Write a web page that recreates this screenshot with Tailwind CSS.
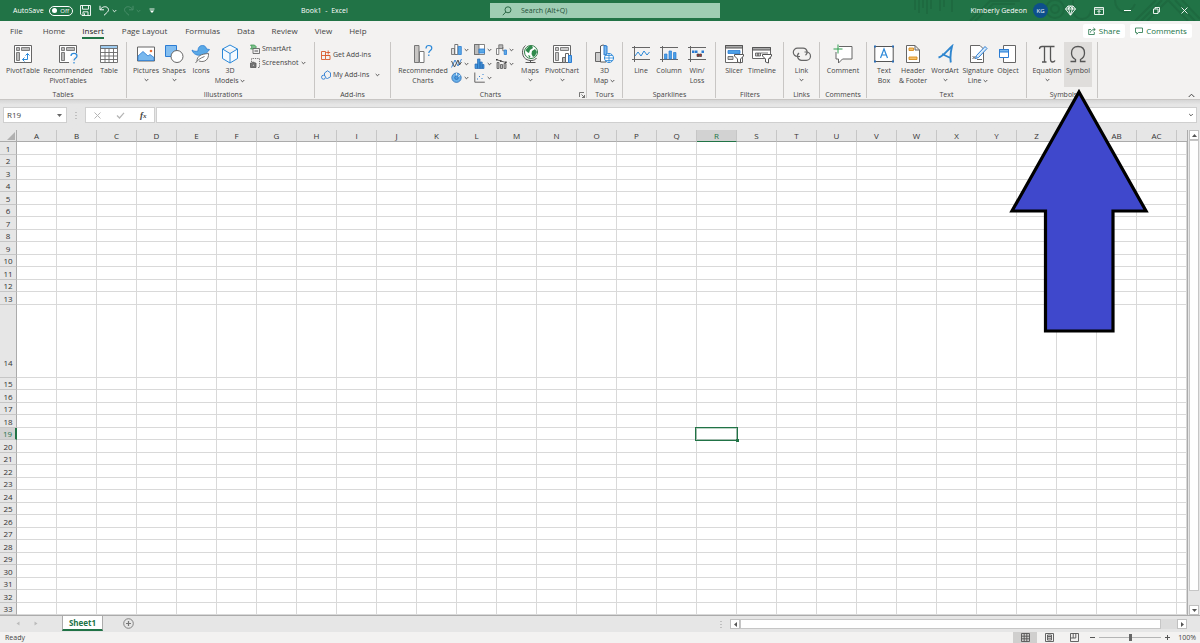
<!DOCTYPE html>
<html lang="en">
<head>
<meta charset="utf-8">
<title>Book1 - Excel</title>
<script src="https://cdn.jsdelivr.net/npm/@tailwindcss/browser@4"></script>
</head>
<body class="relative flex h-screen flex-col overflow-hidden bg-[#e6e6e6] font-['Open_Sans',sans-serif] text-[7px] leading-[10px] text-[#444]">
<svg class="hidden">
  <symbol id="chev" viewBox="0 0 5 4"><path d="M.7 1 2.5 2.8 4.3 1" fill="none" stroke="currentColor" stroke-width=".9"/></symbol>
</svg>

<header class="flex h-[21px] shrink-0 items-center bg-[#217346] text-white">
  <div class="flex w-[301px] shrink-0 items-center pl-[13px]">
    <label for="autosave" class="w-9">AutoSave</label>
    <button id="autosave" role="switch" aria-checked="false" class="flex h-[10px] w-6 items-center justify-between rounded-full border border-white pr-[3px] pl-0.5 text-[6px] leading-[8px]"><span class="size-[5px] rounded-full bg-white"></span>Off</button>
    <button aria-label="Save" class="ml-[7px]"><svg class="size-[11px]" viewBox="0 0 11 11" fill="none" stroke="#fff" stroke-width=".9"><path d="M.5.5h10v10H2L.5 9zM2.5.5v3.700h6V.5M3 10.500V6.800h5v3.700M4.500 8.300v2"/></svg></button>
    <button aria-label="Undo" class="ml-2 flex items-center gap-[2px]"><svg class="size-[11px]" viewBox="0 0 11 11" fill="none" stroke="#fff"><path d="M1 .8v4h4M1.200 4.600C3 2 6 1 8 2.300c2.500 1.700 1.500 4-.5 5.700L5 10.300"/></svg><svg class="h-1 w-[5px]"><use href="#chev"/></svg></button>
    <button aria-label="Redo" class="ml-1.5 flex items-center gap-[2px] text-[#4b8f6b]"><svg class="size-[11px]" viewBox="0 0 11 11" fill="none" stroke="currentColor"><path d="M10 .8v4H6M9.800 4.600C8 2 5 1 3 2.300.5 4 1.500 6.300 3.500 8L6 10.300"/></svg><svg class="h-1 w-[5px]"><use href="#chev"/></svg></button>
    <button aria-label="Customize Quick Access Toolbar" class="ml-2"><svg class="size-[6px]" viewBox="0 0 6 6"><path d="M.5 1h5" stroke="#fff" stroke-width=".9"/><path d="M.7 2.500h4.600L3 5z" fill="#fff"/></svg></button>
  </div>
  <h1 class="w-[189px] shrink-0 whitespace-pre">Book1  -  Excel</h1>
  <label class="flex h-[15px] w-[230px] shrink-0 items-center bg-[#9fcdb3] pl-3 text-[#1e4e34]">
    <svg class="size-[10px]" viewBox="0 0 10 10" fill="none" stroke="#1e5c3a" stroke-width=".9"><circle cx="6" cy="3.800" r="3"/><path d="M3.800 6 .8 9.200"/></svg>
    <input aria-label="Search" placeholder="Search (Alt+Q)" class="ml-[9px] w-40 bg-transparent outline-none placeholder:text-[#1e4e34]">
  </label>
  <div class="relative ml-auto h-full w-[290px] shrink-0">
    <svg class="absolute inset-0 h-full w-full" viewBox="0 0 290 21" fill="none" stroke="#1e6a40" stroke-width="2">
      <path d="M5 0v10M9 0v13M13 0v8M17 0v14M21 0v9M30 0v11M34 0v7M42 0v12M60 21 80 1h30M65 21 83 4h22M225 21l21-21M231 21l21-21M237 21l21-21M258 0l20 21M265 0l20 21M272 0l18 19"/>
      <circle cx="145" cy="9" r="9"/><circle cx="145" cy="9" r="4"/><path d="M163 0v10a9 9 0 0 0 18 0M205 0c0 14 16 16 20 4"/>
    </svg>
    <div class="relative flex h-full items-center justify-end pr-3">
      <span>Kimberly Gedeon</span>
      <button class="ml-1.5 size-[15px] rounded-full bg-[#0d4f8b] text-[6px]">KG</button>
      <button aria-label="Premium" class="ml-[17px]"><svg class="size-[11px]" viewBox="0 0 11 11" fill="none" stroke="#fff" stroke-width=".9"><path d="M3 1h5l2.500 3-5 6.300L.5 4zM.5 4h10M3.600 4l1.900 6 1.900-6L5.500 1 3.600 4 3 1m5 0-.6 3"/></svg></button>
      <button aria-label="Ribbon Display Options" class="ml-[18px]"><svg class="h-2 w-[10px]" viewBox="0 0 10 8" fill="none" stroke="#fff" stroke-width=".9"><path d="M.5.5h9v7h-9zM.5 2.200h9M5 6.800V3.500M3.500 5 5 3.500 6.500 5"/></svg></button>
      <button aria-label="Minimize" class="ml-5"><svg class="size-[7px]" viewBox="0 0 7 7"><path d="M0 3.500h7" stroke="#fff"/></svg></button>
      <button aria-label="Restore" class="ml-[22px]"><svg class="size-[7px]" viewBox="0 0 7 7" fill="none" stroke="#fff" stroke-width=".9"><path d="M.5 2h4.500v4.500H.5zM2 2V.5h4.500V5H5"/></svg></button>
      <button aria-label="Close" class="ml-[21px]"><svg class="size-[7px]" viewBox="0 0 7 7"><path d="m.5.5 6 6m0-6-6 6" stroke="#fff" stroke-width=".9"/></svg></button>
    </div>
  </div>
</header>

<nav class="flex h-[20px] shrink-0 items-center bg-[#f3f2f1] pr-2 pb-px pl-[10px] text-[8px] leading-[13px]">
  <a href="#" class="mr-5">File</a>
  <a href="#" class="mr-[17px]">Home</a>
  <a href="#" class="mr-[18px] border-y-2 border-t-transparent border-b-[#217346] text-[#222]">Insert</a>
  <a href="#" class="mr-[18px]">Page Layout</a>
  <a href="#" class="mr-[17px]">Formulas</a>
  <a href="#" class="mr-[17px]">Data</a>
  <a href="#" class="mr-[17px]">Review</a>
  <a href="#" class="mr-[17px]">View</a>
  <a href="#">Help</a>
  <button class="ml-auto flex h-[14px] w-[42px] items-center justify-center gap-[3px] rounded-xs bg-white text-[#217346]"><svg class="size-2" viewBox="0 0 8 8" fill="none" stroke="currentColor" stroke-width=".8"><path d="M3 2.500H.7v5h5.600V5M2.500 5.500C2.500 3.500 4 2.500 7 2.500M5.300.8l2 1.700-2 1.700"/></svg>Share</button>
  <button class="ml-[5px] flex h-[14px] w-[62px] items-center justify-center gap-[3px] rounded-xs bg-white text-[#217346]"><svg class="size-2" viewBox="0 0 8 8" fill="none" stroke="currentColor" stroke-width=".8"><path d="M.5 1h7v4.500H3.500l-1.700 1.700V5.500H.5z"/></svg>Comments</button>
</nav>

<section aria-label="Insert ribbon" class="flex h-[59px] shrink-0 border-b border-[#c8c6c4] bg-[#f3f2f1] text-center [&_button]:shrink-0 [&>div>span]:leading-[7px]">
  <div class="my-[1px] flex w-[127px] flex-col border-r border-[#c8c6c4] pl-1">
    <div class="flex h-[49px] shrink-0 pt-[2px]">
      <button class="flex w-[38px] flex-col items-center gap-[2px]"><svg class="size-5" viewBox="0 0 20 20" fill="none" stroke="#666"><path d="M1.500 1.500h17v17h-17z" fill="#fff"/><path d="M3.500 3.500h3v3h-3zM8.500 3.500h8v3h-8zM3.500 8.500h3v8h-3z" fill="#bbb" stroke-width=".8"/><path d="M9.500 15.500h5v-6M12.500 11.500l2-2 2 2M11.500 13.500l-2 2 2 2" stroke="#2b88d8"/></svg><span>PivotTable</span></button>
      <button class="flex w-[52px] flex-col items-center gap-[2px]"><svg class="size-5" viewBox="0 0 20 20" fill="none" stroke="#666"><path d="M11 18.500H1.500v-17h17V9" fill="#fff"/><path d="M3.500 3.500h3v3h-3zM8.500 3.500h8v3h-8zM3.500 8.500h3v8h-3z" fill="#bbb" stroke-width=".8"/><path d="M13 12c0-2 1.200-2.700 3-2.700s3 1 3 2.700c0 2.300-3 2-3 4.500M16 18v1.500" stroke="#2b88d8" stroke-width="1.200"/></svg><span>Recommended<br>PivotTables</span></button>
      <button class="flex w-[30px] flex-col items-center gap-[2px]"><svg class="size-5" viewBox="0 0 20 20" fill="none" stroke="#666" stroke-width=".9"><path d="M1.500 1.500h17v17h-17z" fill="#fff"/><path d="M1.500 1.500h17v3h-17z" fill="#9ecbef"/><path d="M1.500 8.500h17M1.500 12h17M1.500 15.500h17M6 4.500v14M10 4.500v14M14.500 4.500v14"/></svg><span>Table</span></button>
    </div>
    <span class="pr-1">Tables</span>
  </div>

  <div class="my-[1px] flex w-[188px] flex-col border-r border-[#c8c6c4] pl-[5px]">
    <div class="flex h-[49px] shrink-0 pt-[2px]">
      <button class="flex w-7 flex-col items-center gap-[2px]"><svg class="size-5" viewBox="0 0 20 20" fill="none"><path d="M1.500 3h17v14h-17z" fill="#fff" stroke="#666"/><path d="m2 12 5-4.500 5 4.500 2-1.500 4 3v3H2z" fill="#79b8ee" stroke="#2b7cd3" stroke-width=".8"/><circle cx="15" cy="7" r="1.300" fill="#e8703a"/></svg><span>Pictures</span><svg class="h-1 w-[5px]"><use href="#chev"/></svg></button>
      <button class="flex w-7 flex-col items-center gap-[2px]"><svg class="size-5" viewBox="0 0 20 20"><path d="M1.500 1.500h11v11h-11z" fill="#83bef0" stroke="#2b7cd3"/><circle cx="13" cy="12.500" r="6" fill="#fff" stroke="#666"/></svg><span>Shapes</span><svg class="h-1 w-[5px]"><use href="#chev"/></svg></button>
      <button class="flex w-[26px] flex-col items-center gap-[2px]"><svg class="size-5" viewBox="0 0 20 20"><path d="M1 6c2 1.500 4 1.500 6 1C7 3 9 1.500 11.500 1.500S15 3 15.500 5L18.500 5.500C17 8 15 10 11 11c-5 1-9-1-10-5z" fill="#5aa9e6" stroke="#2b7cd3" stroke-width=".8"/><path d="M6 17c0-5 4-7 11.500-7.500C18 15 14 19 8 17M4.500 19c2-3 5-5 9-6.500" fill="#fff" stroke="#666" stroke-width=".9"/></svg><span>Icons</span></button>
      <button class="flex w-8 flex-col items-center gap-[2px]"><svg class="size-5" viewBox="0 0 20 20" fill="#f4faff" stroke="#2b88d8"><path d="m10 1 7.500 4v9.500L10 19l-7.500-4.500V5zM2.500 5l7.500 4.500L17.500 5M10 9.500V19"/></svg><span class="whitespace-nowrap">3D<br>Models <svg class="inline h-1 w-[5px]"><use href="#chev"/></svg></span></button>
      <div class="flex flex-col gap-1 pl-1">
        <button class="flex items-center gap-0.5"><svg class="size-[10px]" viewBox="0 0 10 10"><path d="M.5 1h4l2 2-2 2h-4l1.500-2z" fill="#7cc08b" stroke="#2f8f46" stroke-width=".7"/><path d="M3 4.500h6.500v5H3z" fill="#eee" stroke="#555" stroke-width=".8"/><path d="M4.500 7h3.500" stroke="#555"/></svg>SmartArt</button>
        <button class="flex items-center gap-0.5"><svg class="size-[10px]" viewBox="0 0 10 10" fill="none" stroke="#555" stroke-width=".8"><path d="M1.500 4V.5h8v9H7" stroke-dasharray="1.300 1"/><path d="M.5 5h1.300l.6-.8h1.700l.6.800H6v4.500H.5z" fill="#777"/><circle cx="3.300" cy="7.200" r="1" fill="#fff"/></svg>Screenshot <svg class="h-1 w-[5px]"><use href="#chev"/></svg></button>
      </div>
    </div>
    <span>Illustrations</span>
  </div>

  <div class="my-[1px] flex w-[76px] flex-col border-r border-[#c8c6c4]">
    <div class="flex h-[49px] shrink-0 flex-col items-start gap-2.5 pt-2 pl-[6px]">
      <button class="flex items-center gap-0.5"><svg class="size-[10px]" viewBox="0 0 10 10" fill="none" stroke="#d8592a" stroke-width=".9"><path d="M.5 1.500H4.500V9.500h-4zM.5 5.500H9M4.500 5.500H9v4H4.500M7.200.5v4M5.200 2.500h4"/></svg>Get Add-ins</button>
      <button class="flex items-center gap-0.5"><svg class="size-[10px]" viewBox="0 0 10 10" fill="none" stroke="#2b7cd3" stroke-width=".9"><path d="M3.500 5V3L6.500.8l3 2v4L6.500 8.500 5 8"/><circle cx="2.500" cy="7.200" r="2"/></svg>My Add-ins <svg class="ml-1 h-1 w-[5px]"><use href="#chev"/></svg></button>
    </div>
    <span>Add-ins</span>
  </div>

  <div class="my-[1px] flex w-[196px] flex-col border-r border-[#c8c6c4] pl-[5px]">
    <div class="flex h-[49px] shrink-0 pt-[2px]">
      <button class="flex w-[54px] flex-col items-center gap-[2px]"><svg class="size-5" viewBox="0 0 20 20" fill="none"><path d="M1.500 1.500H6v17H1.500z" fill="#c8c6c4" stroke="#777"/><path d="M6.500 7.500H11v11H6.500z" fill="#fff" stroke="#777"/><path d="M13 4.500c0-2 1-3 2.800-3s3 1 3 2.700c0 2.300-3 2.300-3 4.800M15.800 10.500V12" stroke="#2b88d8" stroke-width="1.200"/></svg><span>Recommended<br>Charts</span></button>
      <div class="grid w-[68px] grid-cols-3 content-start gap-x-[1px] gap-y-[3px] pl-[1px]">
        <button aria-label="Column chart" class="flex items-center gap-[2px]"><svg class="size-[11px]" viewBox="0 0 11 11" stroke-width=".8"><path d="M.5 4.500h3v6h-3z" fill="#ddd" stroke="#666"/><path d="M3.800.5h3v10h-3z" fill="#fff" stroke="#555"/><path d="M7.300 2.500h3v8h-3z" fill="#5aa9e6" stroke="#2b7cd3"/></svg><svg class="h-1 w-[5px]"><use href="#chev"/></svg></button>
        <button aria-label="Hierarchy chart" class="flex items-center gap-[2px]"><svg class="size-[11px]" viewBox="0 0 11 11" stroke-width=".8"><path d="M.5.5h10v10H.5z" fill="#fff" stroke="#666"/><path d="M.5.5H5v10H.5z" fill="#bbb" stroke="#666"/><path d="M5 5h5.500v4H5z" fill="#5aa9e6" stroke="#2b7cd3"/></svg><svg class="h-1 w-[5px]"><use href="#chev"/></svg></button>
        <button aria-label="Waterfall chart" class="flex items-center gap-[2px]"><svg class="size-[11px]" viewBox="0 0 11 11" stroke-width=".8"><path d="M.5 4.500h2.300v6H.5z" fill="#fff" stroke="#666"/><path d="M2.800.8h4v3.700h-4z" fill="#bbb" stroke="#666"/><path d="M6.800 3v3.800h1.500" fill="none" stroke="#666"/><path d="M8.200 6h2.300v4.500H8.200z" fill="#5aa9e6" stroke="#2b7cd3"/></svg><svg class="h-1 w-[5px]"><use href="#chev"/></svg></button>
        <button aria-label="Line chart" class="flex items-center gap-[2px]"><svg class="size-[11px]" viewBox="0 0 11 11" fill="none" stroke-width=".9"><path d="M.5 9.500 4 2l3 6 3.500-7" stroke="#2b7cd3"/><path d="m.5 3 3 6L7 2l1.500 5 2-3" stroke="#444"/></svg><svg class="h-1 w-[5px]"><use href="#chev"/></svg></button>
        <button aria-label="Statistic chart" class="flex items-center gap-[2px]"><svg class="size-[11px]" viewBox="0 0 11 11" fill="#3f94dc" stroke="#2b6cb3" stroke-width=".7"><path d="M1 6h2.500v4.500H1zM3.500 1H6v9.500H3.500zM6 4h2.200v6.500H6zM8.200 6.500h1.800v4H8.200z"/></svg><svg class="h-1 w-[5px]"><use href="#chev"/></svg></button>
        <button aria-label="Combo chart" class="flex items-center gap-[2px]"><svg class="size-[11px]" viewBox="0 0 11 11" fill="none" stroke="#555" stroke-width=".8"><path d="M1 4.500h2v6H1zM4.500 6.500h2v4h-2zM8 5.500h2v5H8z" fill="#bbb"/><path d="m.5 1.500 4 1.500L10 4.500" stroke="#333"/><path d="M0 1h1.500v1.500H0zM4 2.300h1.500v1.500H4zM9.200 3.500h1.500V5H9.200z" fill="#333" stroke="none"/></svg><svg class="h-1 w-[5px]"><use href="#chev"/></svg></button>
        <button aria-label="Pie chart" class="flex items-center gap-[2px]"><svg class="size-[11px]" viewBox="0 0 11 11" stroke="#2b6cb3" stroke-width=".8"><circle cx="5.500" cy="5.700" r="4.700" fill="#69b0ea"/><path d="M5.500 5.700V1M5.500 5.700 9.500 3" fill="none" stroke="#fff"/><circle cx="5.500" cy="5.700" r="1.800" fill="#4b9be0"/></svg><svg class="h-1 w-[5px]"><use href="#chev"/></svg></button>
        <button aria-label="Scatter chart" class="flex items-center gap-[2px]"><svg class="size-[11px]" viewBox="0 0 11 11"><path d="M.8.5v9.700h10" fill="none" stroke="#555" stroke-width=".9"/><path d="M3 6.500h1v1H3zM5 4h1v1H5zM7.500 6h1v1h-1zM8.500 2h1v1h-1z" fill="#2b7cd3"/></svg><svg class="h-1 w-[5px]"><use href="#chev"/></svg></button>
      </div>
      <button class="flex w-6 flex-col items-center gap-[2px]"><svg class="size-5" viewBox="0 0 20 20" fill="none"><circle cx="11" cy="8" r="6.500" fill="#fff" stroke="#2f7d46"/><path d="m5.500 6 3.500-4h3l1 2-3 2-1 3-2-1zM12 7l3-2 2 3-2 4-2 1-1.500-3zM8 11l2.500 1-1 2z" fill="#2f8a4c"/><path d="M5.500 1.500C1.500 4.500 1.500 12 5.500 14.800s9.500 2 11-.8M10.500 16v2.500M5.500 18.500h10" stroke="#555"/></svg><span>Maps</span><svg class="h-1 w-[5px]"><use href="#chev"/></svg></button>
      <button class="flex w-10 flex-col items-center gap-[2px]"><svg class="size-5" viewBox="0 0 20 20" fill="none" stroke="#666"><path d="M1.500 1.500h17v17h-17z" fill="#fff"/><path d="M3.500 3.500h3v3h-3zM8.500 3.500h8v3h-8zM3.500 8.500h3v8h-3z" fill="#ccc" stroke-width=".8"/><path d="M10.500 13.500h3v5h-3z" fill="#bbb"/><path d="M13.500 9.500h3v9h-3z" fill="#fff"/><path d="M16.500 11.500h3v7h-3z" fill="#69b0ea" stroke="#2b7cd3"/></svg><span>PivotChart</span><svg class="h-1 w-[5px]"><use href="#chev"/></svg></button>
    </div>
    <div class="grid grid-cols-[1fr_auto_1fr] items-center pr-px leading-[7px]"><span></span><span>Charts</span><button aria-label="Charts dialog" class="justify-self-end"><svg class="size-[6px]" viewBox="0 0 6 6" fill="none" stroke="#555" stroke-width=".8"><path d="M.5 5V.5H5M2.500 2.500l3 3M5.500 3v2.500H3"/></svg></button></div>
  </div>

  <div class="my-[1px] flex w-[36px] flex-col border-r border-[#c8c6c4]">
    <div class="flex h-[49px] shrink-0 justify-center pt-[2px]">
      <button class="flex flex-col items-center gap-[2px]"><svg class="size-5" viewBox="0 0 20 20" fill="none"><path d="M1.500 8.500h5v9h-5z" fill="#ccc" stroke="#666"/><path d="M6.500 2 9 1l3 1v16H6.500z" fill="#fff" stroke="#555"/><path d="M10 1.500 13 2v8l-3 1z" fill="#79b8ee" stroke="#2b7cd3"/><circle cx="15" cy="14" r="4.500" fill="#fff" stroke="#2b88d8"/><path d="M10.500 14h9M15 9.500v9M12 11.500h6M12 16.500h6" stroke="#2b88d8" stroke-width=".8"/></svg><span class="whitespace-nowrap">3D<br>Map <svg class="inline h-1 w-[5px]"><use href="#chev"/></svg></span></button>
    </div>
    <span>Tours</span>
  </div>

  <div class="my-[1px] flex w-[93px] flex-col border-r border-[#c8c6c4] pl-[5px]">
    <div class="flex h-[49px] shrink-0 pt-[2px]">
      <button class="flex w-[26px] flex-col items-center gap-[2px]"><svg class="size-5" viewBox="0 0 20 20" fill="none"><path d="M1 3.500h18M1 15.500h18M3.500 2v16" stroke="#666"/><path d="m4 12 3-4 3 4 3-5 3 4 2.500-3" stroke="#2b88d8"/></svg><span>Line</span></button>
      <button class="flex w-[30px] flex-col items-center gap-[2px]"><svg class="size-5" viewBox="0 0 20 20" fill="none"><path d="M1 3.500h18M1 15.500h18M3.500 2v16" stroke="#666"/><path d="M5.500 10H8v5H5.500zM10 7h2.500v8H10zM14.500 8.500H17V15h-2.500z" fill="#4ba0e6" stroke="#2b7cd3" stroke-width=".7"/></svg><span>Column</span></button>
      <button class="flex w-[26px] flex-col items-center gap-[2px]"><svg class="size-5" viewBox="0 0 20 20" fill="none"><path d="M1 3.500h18M1 15.500h18M3.500 2v16" stroke="#666"/><path d="M5 6.500h2.500V9H5zM8 6.500h2.500V9H8zM14.500 6.500H17V9h-2.500z" fill="#2b7cd3"/><path d="M10 10h2v2.500h-2zM12.500 10h2v2.500h-2z" fill="#a33" stroke="#444" stroke-width=".7"/></svg><span>Win/<br>Loss</span></button>
    </div>
    <span class="pr-1">Sparklines</span>
  </div>

  <div class="my-[1px] flex w-[68px] flex-col border-r border-[#c8c6c4] pl-[5px]">
    <div class="flex h-[49px] shrink-0 pt-[2px]">
      <button class="flex w-[26px] flex-col items-center gap-[2px]"><svg class="size-5" viewBox="0 0 20 20" fill="none" stroke="#555"><path d="M1.500 1.500h17v17h-17z" fill="#fff" stroke="#666"/><path d="M1.500 1.500h17v2.500h-17z" fill="#aaa"/><path d="M4 6.500h12v3H4z" fill="#4ba0e6" stroke="#2b7cd3" stroke-width=".8"/><path d="M4 12.500h5v3H4z" fill="#ccc" stroke-width=".8"/><path d="M10.500 10.500h9v1.500L16.500 15v4l-3-1v-3l-3-3z" fill="#fff"/></svg><span>Slicer</span></button>
      <button class="flex w-[30px] flex-col items-center gap-[2px]"><svg class="size-5" viewBox="0 0 20 20" fill="none" stroke="#555"><path d="M.500 3.500h18v11H.5z" fill="#fff" stroke="#666"/><path d="M.5 3.500h18V6H.5z" fill="#aaa"/><path d="M3.500 9h2.500v3H3.500zM6 9h2.500v3H6zM8.500 9H16" fill="#ccc" stroke-width=".8"/><path d="M10.500 10.500h9v1.500L16.500 15v4l-3-1v-3l-3-3z" fill="#fff"/></svg><span>Timeline</span></button>
    </div>
    <span class="pr-1">Filters</span>
  </div>

  <div class="my-[1px] flex w-[36px] flex-col border-r border-[#c8c6c4]">
    <div class="flex h-[49px] shrink-0 justify-center pt-[2px]">
      <button class="flex flex-col items-center gap-[2px]"><svg class="size-5" viewBox="0 0 20 20" fill="none" stroke="#666" stroke-width="1.200"><path d="M8 12.500H5.500a4.200 4.200 0 0 1 0-8.400h5.500a4 4 0 0 1 2.500 7.200"/><path d="M12.500 8h1.800a4.200 4.200 0 0 1 0 8.400H9.500A4.200 4.200 0 0 1 7 9"/></svg><span>Link</span><svg class="h-1 w-[5px]"><use href="#chev"/></svg></button>
    </div>
    <span>Links</span>
  </div>

  <div class="my-[1px] flex w-[47px] flex-col border-r border-[#c8c6c4]">
    <div class="flex h-[49px] shrink-0 justify-center pt-[2px]">
      <button class="flex flex-col items-center gap-[2px]"><svg class="size-5" viewBox="0 0 20 20" fill="none"><path d="M6 2.500h13V15H9.500l-4 4V15H3V8" fill="#fff" stroke="#666"/><path d="M5 .5v9M.5 5h9" stroke="#2f9e4f"/></svg><span>Comment</span></button>
    </div>
    <span>Comments</span>
  </div>

  <div class="my-[1px] flex w-[160px] flex-col border-r border-[#c8c6c4] pl-1">
    <div class="flex h-[49px] shrink-0 pt-[2px]">
      <button class="flex w-[26px] flex-col items-center gap-[2px]"><svg class="size-5" viewBox="0 0 20 20" fill="none"><path d="M.8 2.500h18.400v15H.8z" fill="#fff" stroke="#555"/><path d="m6.500 14 3.500-9 3.500 9M7.800 11h4.400" stroke="#2b88d8" stroke-width="1.200"/><path d="M0 1.500h2v2H0zM18 1.500h2v2h-2zM0 16.500h2v2H0zM18 16.500h2v2h-2z" fill="#2b6cb3"/></svg><span>Text<br>Box</span></button>
      <button class="flex w-8 flex-col items-center gap-[2px]"><svg class="size-5" viewBox="0 0 20 20" fill="none"><path d="M3.500 1.500h8.500l4.500 4.500v12.500h-13zM12 1.500V6h4.500" fill="#fff" stroke="#666"/><path d="M6 4h4.500v2.500H6zM6 13h8v2.500H6z" fill="#f5c26b" stroke="#d98c1d" stroke-width=".9"/></svg><span class="whitespace-nowrap">Header<br>&amp; Footer</span></button>
      <button class="flex w-8 flex-col items-center gap-[2px]"><svg class="size-5" viewBox="0 0 20 20" fill="none" stroke="#2f86cf" stroke-width="1.900"><path d="M3.500 13.500C8 12.500 12.500 6 17 2.200 15.500 8 15 13 15.800 18.500M7 10l8.500 4"/></svg><span>WordArt</span><svg class="h-1 w-[5px]"><use href="#chev"/></svg></button>
      <button class="flex w-[34px] flex-col items-center gap-[2px]"><svg class="size-5" viewBox="0 0 20 20" fill="none"><path d="M2.500 1.500H12L15.500 5v13.500h-13zM4.500 12l3 3m0-3-3 3M9 15.500h5" fill="#fff" stroke="#666"/><path d="m17 2.500 2 2-8.500 9-3 1 1-3z" fill="#d5eafb" stroke="#2b7cd3"/></svg><span class="whitespace-nowrap">Signature<br>Line <svg class="inline h-1 w-[5px]"><use href="#chev"/></svg></span></button>
      <button class="flex w-[26px] flex-col items-center gap-[2px]"><svg class="size-5" viewBox="0 0 20 20" fill="none"><path d="M5.500 1.500h12v17h-12z" fill="#fff" stroke="#666"/><path d="M1.500 5.500h9v8h-9z" fill="#fff" stroke="#2b7cd3"/><path d="M1.500 5.500h9v2.500h-9z" fill="#79b8ee" stroke="#2b7cd3"/></svg><span>Object</span></button>
    </div>
    <span class="pr-1">Text</span>
  </div>

  <div class="my-[1px] flex w-[71px] flex-col border-r border-[#c8c6c4] pl-[3px]">
    <div class="flex h-[49px] shrink-0">
      <button class="flex w-[34px] flex-col items-center gap-[2px] pt-[2px]"><svg class="size-5" viewBox="0 0 20 20" fill="none" stroke="#555" stroke-width="1.300"><path d="M2.500 5c0-2 1-2.500 2.500-2.500h12.500M7.500 2.500V18M5 18h4.500M13.500 2.500V15c0 2 .5 3 2 3s2-.5 2.500-1.500"/></svg><span>Equation</span><svg class="h-1 w-[5px]"><use href="#chev"/></svg></button>
      <button class="flex h-[45px] w-7 flex-col items-center gap-[2px] bg-[#dfdddb] pt-[2px]"><svg class="size-5" viewBox="0 0 20 20" fill="none" stroke="#555" stroke-width="1.300"><path d="M2.500 17.500h5v-2C4.500 14 3.500 11.500 3.500 9c0-4 2.500-6.500 6.500-6.500S16.500 5 16.500 9c0 2.500-1 5-4 6.500v2h5"/></svg><span>Symbol</span></button>
    </div>
    <span>Symbols</span>
  </div>
  <button aria-label="Collapse ribbon" class="ml-auto self-end p-[5px] pb-px"><svg class="h-[5px] w-[7px]" viewBox="0 0 7 5"><path d="M.7 4 3.500 1.200 6.300 4" fill="none" stroke="#444"/></svg></button>
</section>

<section aria-label="Formula bar" class="flex h-[30px] shrink-0 items-start bg-gradient-to-b from-[#d6d6d6] to-[#e6e6e6] to-15% pt-[7px] pr-[3px] pl-[3px]">
  <div class="flex h-4 w-[64px] items-center border border-[#cfcfcf] bg-white pr-1">
    <input aria-label="Name box" value="R19" class="w-full min-w-0 bg-transparent pl-[3px] text-[8px] outline-none">
    <button aria-label="Name list"><svg class="h-[3px] w-[5px]" viewBox="0 0 5 3"><path d="M0 0h5L2.500 3z" fill="#666"/></svg></button>
  </div>
  <svg class="mx-[8px] h-4 w-[2px]" viewBox="0 0 2 16"><path d="M1 5v7" stroke="#999" stroke-dasharray="1 2"/></svg>
  <div class="flex h-4 w-[70px] items-center justify-around border border-[#cfcfcf] bg-white">
    <button aria-label="Cancel"><svg class="size-[7px]" viewBox="0 0 7 7"><path d="m.5.5 6 6m0-6-6 6" stroke="#b5b5b5"/></svg></button>
    <button aria-label="Enter"><svg class="h-[7px] w-[9px]" viewBox="0 0 9 7"><path d="m1 3.500 2.500 2.500L8 .8" fill="none" stroke="#b5b5b5" stroke-width="1.200"/></svg></button>
    <button aria-label="Insert function" class="font-['Liberation_Serif',serif] text-[9px] font-bold italic">f<span class="text-[7px]">x</span></button>
  </div>
  <div class="ml-[1px] flex h-4 flex-1 items-center border border-[#cfcfcf] bg-white pr-0.5">
    <input aria-label="Formula" class="w-full bg-transparent outline-none">
    <button aria-label="Expand formula bar"><svg class="h-1 w-[6px]"><use href="#chev"/></svg></button>
  </div>
</section>

<main class="flex min-h-0 flex-1 overflow-hidden">
  <div class="min-w-0 flex-1 overflow-hidden border-r border-[#ababab]">
    <table class="w-full table-fixed border-separate border-spacing-0 bg-white text-center text-[8px] text-[#333]">
      <thead><tr id="heads" class="h-3"></tr></thead>
      <tbody id="cells"></tbody>
    </table>
  </div>
  <div class="flex w-3 shrink-0 flex-col px-px">
    <button aria-label="Scroll up" class="flex h-[10px] items-center justify-center border border-[#c0c0c0] bg-white"><svg class="h-[3px] w-[5px]" viewBox="0 0 5 3"><path d="M0 3h5L2.500 0z" fill="#555"/></svg></button>
    <div class="h-[451px] border border-[#c6c6c6] bg-white"></div>
    <div class="flex-1"></div>
    <button aria-label="Scroll down" class="flex h-[10px] items-center justify-center border border-[#c0c0c0] bg-white"><svg class="h-[3px] w-[5px]" viewBox="0 0 5 3"><path d="M0 0h5L2.500 3z" fill="#555"/></svg></button>
  </div>
</main>

<div class="flex h-[17px] shrink-0 items-start border-t border-[#ababab] pr-[13px]">
  <div class="flex w-[62px] items-center gap-3.5 pt-[5px] pl-4">
    <button aria-label="Previous sheet"><svg class="h-[5px] w-[4px]" viewBox="0 0 4 5"><path d="M3.500.5v4L.5 2.500z" fill="#bbb"/></svg></button>
    <button aria-label="Next sheet"><svg class="h-[5px] w-[4px]" viewBox="0 0 4 5"><path d="M.5.5v4l3-2z" fill="#bbb"/></svg></button>
  </div>
  <button class="h-[15px] w-[41px] border-x border-b-2 border-x-[#ababab] border-b-[#217346] bg-white text-[8px] leading-[13px] font-bold text-[#217346]">Sheet1</button>
  <button aria-label="New sheet" class="mt-[2px] ml-5"><svg class="size-[11px]" viewBox="0 0 11 11" fill="none" stroke="#777" stroke-width=".9"><circle cx="5.500" cy="5.500" r="4.800"/><path d="M5.500 3v5M3 5.500h5" stroke-width="1.200"/></svg></button>
  <svg class="ml-auto h-4 w-[2px]" viewBox="0 0 2 16"><path d="M1 5v7" stroke="#999" stroke-dasharray="1 2"/></svg>
  <div class="mt-[3px] ml-2 flex h-[10px] w-[457px]">
    <button aria-label="Scroll left" class="flex w-[10px] items-center justify-center border border-[#c0c0c0] bg-white"><svg class="h-[5px] w-[3px]" viewBox="0 0 3 5"><path d="M3 0v5L0 2.500z" fill="#555"/></svg></button>
    <div class="flex-1 border border-[#c6c6c6] bg-white"></div>
    <div class="w-4 bg-[#dcdcdc]"></div>
    <button aria-label="Scroll right" class="flex w-[10px] items-center justify-center border border-[#c0c0c0] bg-white"><svg class="h-[5px] w-[3px]" viewBox="0 0 3 5"><path d="M0 0v5l3-2.500z" fill="#555"/></svg></button>
  </div>
</div>

<footer class="flex h-[11px] shrink-0 items-center bg-[#f3f2f1] pr-1 pl-[5px]">
  <span>Ready</span>
  <button aria-label="Normal view" class="ml-auto flex h-full w-[24px] items-center justify-center bg-[#d0cfce]"><svg class="size-[9px]" viewBox="0 0 9 9" fill="none" stroke="#555" stroke-width=".9"><path d="M.5.5h8v8h-8zM.5 3.200h8M.5 5.800h8M3.200.5v8M5.800.5v8"/></svg></button>
  <button aria-label="Page layout view" class="ml-2"><svg class="size-[9px]" viewBox="0 0 9 9" fill="none" stroke="#555" stroke-width=".9"><path d="M.5.5h8v8h-8zM2.500 2h4v5h-4zM3 3.500h3M3 5.200h3"/></svg></button>
  <button aria-label="Page break preview" class="ml-4"><svg class="size-[9px]" viewBox="0 0 9 9" fill="none" stroke="#555" stroke-width=".9"><path d="M.5.5h8v8h-8zM3.200.5v4.500M.5 5h5.300V.5"/></svg></button>
  <button aria-label="Zoom out" class="ml-[11px]"><svg class="size-[5px]" viewBox="0 0 5 5"><path d="M0 2.500h5" stroke="#555"/></svg></button>
  <input type="range" aria-label="Zoom" min="0" max="100" value="50" class="mx-1 h-[7px] w-[62px] appearance-none bg-[linear-gradient(#b5b5b5,#b5b5b5)] bg-[length:100%_1px] bg-center bg-no-repeat [&::-webkit-slider-thumb]:h-[7px] [&::-webkit-slider-thumb]:w-[3px] [&::-webkit-slider-thumb]:appearance-none [&::-webkit-slider-thumb]:bg-[#666]">
  <button aria-label="Zoom in"><svg class="size-[5px]" viewBox="0 0 5 5"><path d="M0 2.500h5M2.500 0v5" stroke="#555"/></svg></button>
  <button class="ml-2">100%</button>
</footer>

<svg class="pointer-events-none absolute top-[88px] left-[1008px] h-[248px] w-[142px]" viewBox="0 0 142 248"><path d="M71 4 138 123H105V243H37.500V123H4z" fill="#3f48cc" stroke="#000" stroke-width="3.200"/></svg>

<script>
  const names = [...'ABCDEFGHIJKLMNOPQRSTUVWXYZ', 'AA', 'AB', 'AC', ''];
  const heads = document.getElementById('heads');
  heads.innerHTML = '<th class="w-[17px] border-r border-b border-[#ababab] bg-[#e6e6e6] p-0"><svg class="ml-auto mr-px size-2" viewBox="0 0 8 8"><path d="M8 0v8H0z" fill="#b0b0b0"/></svg></th>' +
    names.map(n => {
      if (n === 'R') return '<th class="w-10 border-r border-b border-r-[#c6c6c6] border-b-[#217346] bg-[#d2d2d2] p-0 leading-[11px] font-normal text-[#217346]">R</th>';
      if (n === '') return '<th class="border-b border-[#ababab] bg-[#e6e6e6] p-0"></th>';
      return '<th class="w-10 border-r border-b border-r-[#c6c6c6] border-b-[#ababab] bg-[#e6e6e6] p-0 leading-[11px] font-normal">' + n + '</th>';
    }).join('');
  let rows = '';
  for (let r = 1; r <= 33; r++) {
    const size = r === 14 ? 'h-[73px]' : (r < 14) === (r % 2 === 1) ? 'h-[13px]' : 'h-[12px]';
    const head = r === 19
      ? '<th class="border-r-2 border-b border-r-[#217346] border-b-[#c6c6c6] bg-[#d2d2d2] p-0 align-bottom leading-[11px] font-normal text-[#217346]">19</th>'
      : r === 14
      ? '<th class="border-r border-b border-r-[#ababab] border-b-[#c6c6c6] bg-[#e6e6e6] p-0 pb-[9px] align-bottom leading-[11px] font-normal">14</th>'
      : '<th class="border-r border-b border-r-[#ababab] border-b-[#c6c6c6] bg-[#e6e6e6] p-0 align-bottom leading-[11px] font-normal">' + r + '</th>';
    rows += '<tr class="' + size + '">' + head + names.map((n, c) =>
      r === 19 && n === 'R'
        ? '<td class="relative border-r border-b border-[#d9d9d9] p-0"><span class="absolute -top-px -right-[2px] -bottom-[2px] -left-[2px] border border-[#217346] outline outline-[#217346]/30 -outline-offset-2"></span><span class="absolute -right-[3px] -bottom-[3px] size-[3px] bg-[#217346]"></span></td>'
        : '<td class="border-r border-b border-[#d9d9d9] p-0"></td>').join('') + '</tr>';
  }
  document.getElementById('cells').innerHTML = rows;
</script>
</body>
</html>
